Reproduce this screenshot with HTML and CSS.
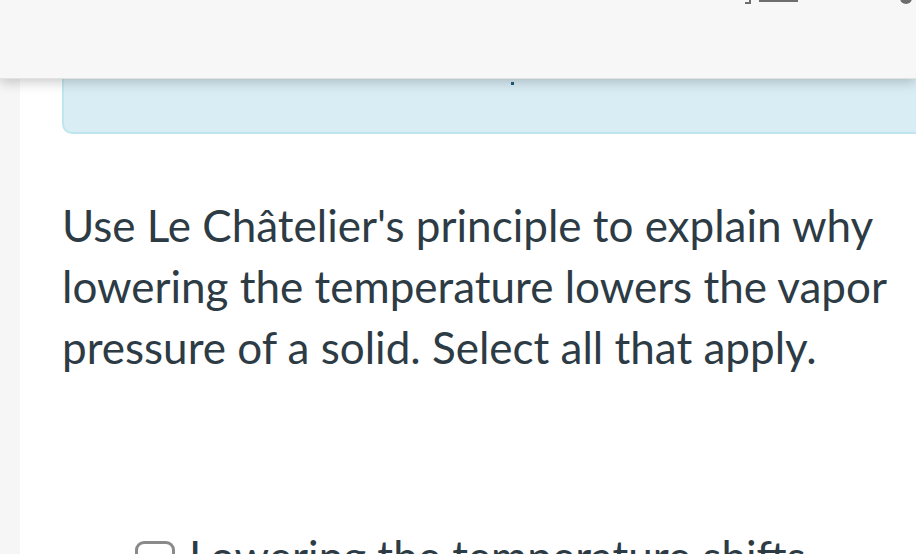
FILE: index.html
```html
<!DOCTYPE html>
<html lang="en">
<head>
<meta charset="utf-8">
<title>Question</title>
<link rel="stylesheet" href="styles.css">
</head>
<body>
<header class="header">
  <div class="tools">
    <span class="corner"></span>
    <span class="bar"></span>
    <span class="dot-icon"></span>
  </div>
</header>
<div class="layout">
  <aside class="sidebar"></aside>
  <main class="main">
    <div class="notice"><span class="notice-mark"></span></div>
    <p class="question">Use Le Châtelier's principle to explain why lowering the temperature lowers the vapor pressure of a solid. Select all that apply.</p>
    <label class="answer">
      <span class="checkbox"></span>
      <span class="answer-text">Lowering the temperature shifts</span>
    </label>
  </main>
</div>
</body>
</html>
```

FILE: styles.css
```css
html, body {
  margin: 0;
  padding: 0;
  height: 554px;
  overflow: hidden;
  background: #ffffff;
  font-family: Lato, "Open Sans", sans-serif;
  color: #2d3b45;
}

.header {
  position: relative;
  z-index: 2;
  height: 78px;
  background: #f7f7f7;
  border-bottom: 1px solid #e2e2e2;
  box-shadow: 0 3px 12px rgba(0, 0, 0, 0.22);
}

.tools {
  display: flex;
  justify-content: flex-end;
  align-items: flex-start;
  padding-right: 4px;
}

.corner {
  width: 4px;
  height: 2px;
  border-right: 2px solid #6e6e6e;
  border-bottom: 2px solid #6e6e6e;
  margin-right: 8px;
}

.bar {
  width: 39px;
  height: 2px;
  background: #6e6e6e;
  margin-right: 102px;
}

.dot-icon {
  width: 12px;
  height: 12px;
  border-radius: 50%;
  background: #6e6e6e;
  margin-top: -8px;
}

.layout {
  display: flex;
  height: 476px;
}

.sidebar {
  width: 20px;
  background: #f6f6f6;
  flex: none;
}

.main {
  flex: 1;
  padding-left: 42px;
  min-width: 0;
}

.notice {
  margin-top: -7px;
  height: 62px;
  box-sizing: border-box;
  background: #d9edf5;
  border: 2px solid #bfe6f0;
  border-right: none;
  border-radius: 0 0 0 10px;
  display: flex;
  padding-left: 447px;
  padding-top: 8px;
}

.notice-mark {
  width: 3px;
  height: 3px;
  background: #245a7c;
}

.question {
  margin: 61px 0 0;
  font-size: 44px;
  line-height: 61px;
  padding-right: 20px;
}

.answer {
  display: flex;
  align-items: flex-start;
  margin-top: 148px;
  padding-left: 73px;
  font-size: 44px;
  line-height: 61px;
}

.checkbox {
  flex: none;
  width: 40px;
  height: 40px;
  box-sizing: border-box;
  border: 3px solid #8a8a8a;
  border-radius: 9px;
  margin-top: 15px;
  margin-right: 14px;
}

.answer-text {
  white-space: nowrap;
}
```
